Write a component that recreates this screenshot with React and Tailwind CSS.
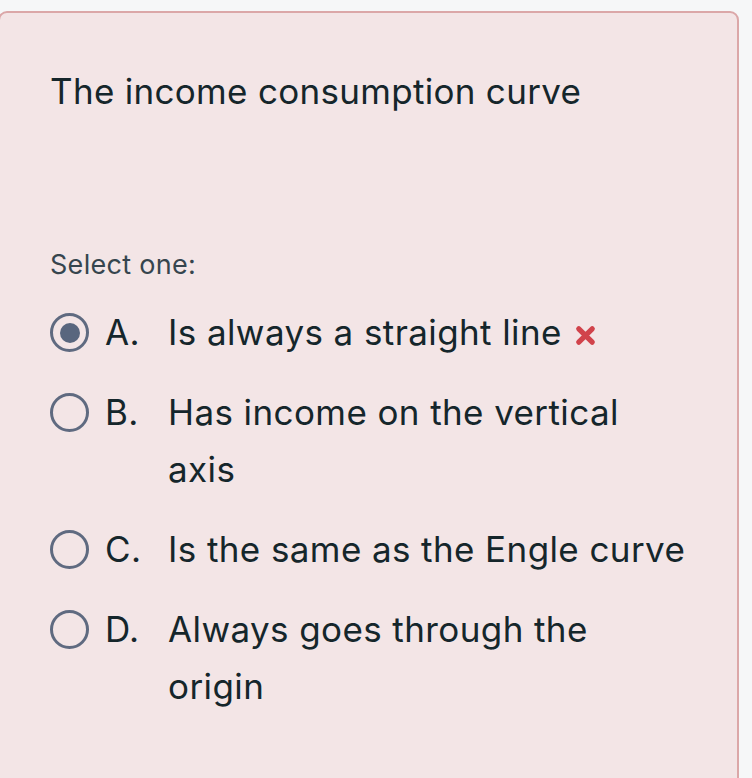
import React from "react";

const options = [
    { key: "A.", text: "Is always a straight line", checked: true, wrong: true },
    { key: "B.", text: "Has income on the vertical axis" },
    { key: "C.", text: "Is the same as the Engle curve" },
    { key: "D.", text: "Always goes through the origin" },
];

function Radio({ checked }) {
    return (
        <span className="mt-[9px] flex h-[39px] w-[39px] shrink-0 items-center justify-center rounded-full border-[3px] border-[#5f6a80]">
            {checked && <span className="h-[20px] w-[20px] rounded-full bg-[#59667e]" />}
        </span>
    );
}

export default function App() {
    return (
        <div className="min-h-[778px] w-[752px] overflow-hidden bg-[#f6f7f8] pt-[11px] font-['Inter',sans-serif]">
            <div className="h-[800px] w-[741px] -ml-[2px] rounded-[9px] border-2 border-[#dba7a8] bg-[#f3e5e6] pl-[50px] pt-[54px]">
                <h2 className="text-[35px] leading-[48px] tracking-[0.3px] text-[#15262b]">The income consumption curve</h2>

                <div className="mt-[132px] text-[27px] leading-[36px] tracking-[0.3px] text-[#36454e]">Select one:</div>

                {/* answers */}
                <div className="mt-[21px] flex flex-col gap-[23px]">
                    {options.map((o) => (
                        <label key={o.key} className="flex items-start text-[35px] leading-[57px] tracking-[0.4px] text-[#15262b]">
                            <Radio checked={o.checked} />
                            <span className="ml-[16px] w-[63px] shrink-0">{o.key}</span>
                            <span className="w-[522px]">
                                {o.text}
                                {o.wrong && (
                                    <svg viewBox="0 0 24 24" className="ml-[12px] inline-block h-[23px] w-[23px] align-[-2px]">
                                        <path d="M5 5 L19 19 M19 5 L5 19" stroke="#d1434b" strokeWidth="5.5" strokeLinecap="round" />
                                    </svg>
                                )}
                            </span>
                        </label>
                    ))}
                </div>
            </div>
        </div>
    );
}
